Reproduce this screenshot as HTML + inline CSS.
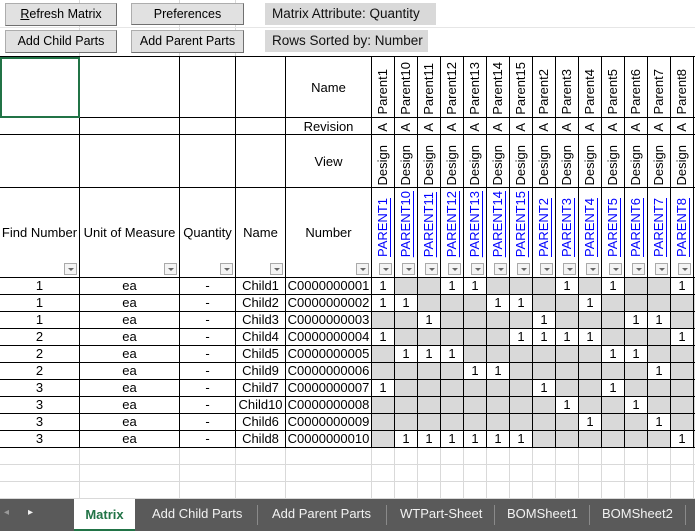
<!DOCTYPE html>
<html><head><meta charset="utf-8"><style>
body{margin:0;width:695px;height:531px;overflow:hidden;background:#fff;font-family:"Liberation Sans",Arial,sans-serif;position:relative}
.g{position:absolute;background:#d9d9d9}
.btn{position:absolute;background:#e1e1e1;border:1px solid #adadad;border-right-color:#707070;border-bottom-color:#707070;font-size:12.5px;text-align:center;line-height:20px;color:#000;box-sizing:border-box}
.lbl{position:absolute;background:#d9d9d9;font-size:13.5px;line-height:22px;padding-left:7px;box-sizing:border-box;color:#111}
table{position:absolute;left:-1px;top:56px;border-collapse:collapse;table-layout:fixed;width:717px}
td{border:1px solid #000;padding:0;font-size:13px;text-align:center;position:relative;overflow:hidden;white-space:nowrap}
.v{writing-mode:vertical-rl;transform:rotate(180deg);position:absolute;left:50%;margin-left:-8px;bottom:2px;width:16px;text-align:left;line-height:16px;font-size:13px;font-weight:normal}
.p{color:#00f;text-decoration:underline;bottom:20px}
.f{position:absolute;right:2px;bottom:2px;width:13px;height:12px;border:1px solid #aaa;background:#f4f4f4;box-sizing:border-box}
.f:after{content:"";position:absolute;left:3px;top:4px;border-left:3px solid transparent;border-right:3px solid transparent;border-top:3px solid #666}
.h4 span{position:absolute;left:0;right:0;top:37px;font-size:13px}
.d td{height:16px;line-height:16px}
.e{background:#d9d9d9}
.tabs{position:absolute;left:0;top:499px;width:695px;height:32px;background:#5a5a5a;color:#f2f2f2;font-size:13px}
.tabs div{position:absolute;top:7px}
.sep{position:absolute;top:6px;width:1px;height:20px;background:#8a8a8a}
</style></head><body>
<div class="g" style="left:79px;top:0;width:1px;height:56px"></div>
<div class="g" style="left:179px;top:0;width:1px;height:56px"></div>
<div class="g" style="left:235px;top:0;width:1px;height:56px"></div>
<div class="g" style="left:0;top:27px;width:695px;height:1px;background:#e6e6e6"></div>
<div class="btn" style="left:5px;top:3px;width:112px;height:23px"><u>R</u>efresh Matrix</div>
<div class="btn" style="left:131px;top:3px;width:113px;height:22px">Preferences</div>
<div class="btn" style="left:5px;top:30px;width:112px;height:23px">Add Child Parts</div>
<div class="btn" style="left:131px;top:30px;width:113px;height:23px">Add Parent Parts</div>
<div class="lbl" style="left:265px;top:3px;width:171px;height:22px">Matrix Attribute: Quantity</div>
<div class="lbl" style="left:265px;top:30px;width:163px;height:22px">Rows Sorted by: Number</div>

<div class="g" style="left:79px;top:448px;width:1px;height:51px"></div>
<div class="g" style="left:179px;top:448px;width:1px;height:51px"></div>
<div class="g" style="left:235px;top:448px;width:1px;height:51px"></div>
<div class="g" style="left:285px;top:448px;width:1px;height:51px"></div>
<div class="g" style="left:371px;top:448px;width:1px;height:51px"></div>
<div class="g" style="left:0;top:464px;width:695px;height:1px"></div>
<div class="g" style="left:0;top:481px;width:695px;height:1px"></div>
<div class="g" style="left:0;top:498px;width:695px;height:1px"></div>
<div style="position:absolute;left:394px;top:448px;width:300px;height:51px;background:repeating-linear-gradient(90deg,#d9d9d9 0 1px,transparent 1px 23px)"></div>

<table>
<colgroup><col style="width:80px"><col style="width:100px"><col style="width:56px"><col style="width:50px"><col style="width:86px">
<col style="width:23px"><col style="width:23px"><col style="width:23px"><col style="width:23px"><col style="width:23px"><col style="width:23px"><col style="width:23px"><col style="width:23px"><col style="width:23px"><col style="width:23px"><col style="width:23px"><col style="width:23px"><col style="width:23px"><col style="width:23px"><col style="width:23px"></colgroup>
<tr style="height:61px"><td style="outline:2px solid #217346;outline-offset:-2px"></td><td></td><td></td><td></td><td>Name</td>
<td><span class="v">Parent1</span></td><td><span class="v">Parent10</span></td><td><span class="v">Parent11</span></td><td><span class="v">Parent12</span></td><td><span class="v">Parent13</span></td><td><span class="v">Parent14</span></td><td><span class="v">Parent15</span></td><td><span class="v">Parent2</span></td><td><span class="v">Parent3</span></td><td><span class="v">Parent4</span></td><td><span class="v">Parent5</span></td><td><span class="v">Parent6</span></td><td><span class="v">Parent7</span></td><td><span class="v">Parent8</span></td><td><span class="v">Parent9</span></td></tr>
<tr style="height:17px"><td></td><td></td><td></td><td></td><td>Revision</td>
<td><span class="v">A</span></td><td><span class="v">A</span></td><td><span class="v">A</span></td><td><span class="v">A</span></td><td><span class="v">A</span></td><td><span class="v">A</span></td><td><span class="v">A</span></td><td><span class="v">A</span></td><td><span class="v">A</span></td><td><span class="v">A</span></td><td><span class="v">A</span></td><td><span class="v">A</span></td><td><span class="v">A</span></td><td><span class="v">A</span></td><td><span class="v">A</span></td></tr>
<tr style="height:53px"><td></td><td></td><td></td><td></td><td>View</td>
<td><span class="v">Design</span></td><td><span class="v">Design</span></td><td><span class="v">Design</span></td><td><span class="v">Design</span></td><td><span class="v">Design</span></td><td><span class="v">Design</span></td><td><span class="v">Design</span></td><td><span class="v">Design</span></td><td><span class="v">Design</span></td><td><span class="v">Design</span></td><td><span class="v">Design</span></td><td><span class="v">Design</span></td><td><span class="v">Design</span></td><td><span class="v">Design</span></td><td><span class="v">Design</span></td></tr>
<tr style="height:90px" class="h4"><td><span>Find Number</span><i class="f"></i></td><td><span>Unit of Measure</span><i class="f"></i></td><td><span>Quantity</span><i class="f"></i></td><td><span>Name</span><i class="f"></i></td><td><span>Number</span><i class="f"></i></td>
<td><b class="v p">PARENT1</b><i class="f"></i></td><td><b class="v p">PARENT10</b><i class="f"></i></td><td><b class="v p">PARENT11</b><i class="f"></i></td><td><b class="v p">PARENT12</b><i class="f"></i></td><td><b class="v p">PARENT13</b><i class="f"></i></td><td><b class="v p">PARENT14</b><i class="f"></i></td><td><b class="v p">PARENT15</b><i class="f"></i></td><td><b class="v p">PARENT2</b><i class="f"></i></td><td><b class="v p">PARENT3</b><i class="f"></i></td><td><b class="v p">PARENT4</b><i class="f"></i></td><td><b class="v p">PARENT5</b><i class="f"></i></td><td><b class="v p">PARENT6</b><i class="f"></i></td><td><b class="v p">PARENT7</b><i class="f"></i></td><td><b class="v p">PARENT8</b><i class="f"></i></td><td><b class="v p">PARENT9</b><i class="f"></i></td></tr>
<tr class="d"><td>1</td><td>ea</td><td>-</td><td>Child1</td><td>C0000000001</td><td>1</td><td class="e"></td><td class="e"></td><td>1</td><td>1</td><td class="e"></td><td class="e"></td><td class="e"></td><td>1</td><td class="e"></td><td>1</td><td class="e"></td><td class="e"></td><td>1</td><td class="e"></td></tr>
<tr class="d"><td>1</td><td>ea</td><td>-</td><td>Child2</td><td>C0000000002</td><td>1</td><td>1</td><td class="e"></td><td class="e"></td><td class="e"></td><td>1</td><td>1</td><td class="e"></td><td class="e"></td><td>1</td><td class="e"></td><td class="e"></td><td class="e"></td><td class="e"></td><td class="e"></td></tr>
<tr class="d"><td>1</td><td>ea</td><td>-</td><td>Child3</td><td>C0000000003</td><td class="e"></td><td class="e"></td><td>1</td><td class="e"></td><td class="e"></td><td class="e"></td><td class="e"></td><td>1</td><td class="e"></td><td class="e"></td><td class="e"></td><td>1</td><td>1</td><td class="e"></td><td class="e"></td></tr>
<tr class="d"><td>2</td><td>ea</td><td>-</td><td>Child4</td><td>C0000000004</td><td>1</td><td class="e"></td><td class="e"></td><td class="e"></td><td class="e"></td><td class="e"></td><td>1</td><td>1</td><td>1</td><td>1</td><td class="e"></td><td class="e"></td><td class="e"></td><td>1</td><td class="e"></td></tr>
<tr class="d"><td>2</td><td>ea</td><td>-</td><td>Child5</td><td>C0000000005</td><td class="e"></td><td>1</td><td>1</td><td>1</td><td class="e"></td><td class="e"></td><td class="e"></td><td class="e"></td><td class="e"></td><td class="e"></td><td>1</td><td>1</td><td class="e"></td><td class="e"></td><td class="e"></td></tr>
<tr class="d"><td>2</td><td>ea</td><td>-</td><td>Child9</td><td>C0000000006</td><td class="e"></td><td class="e"></td><td class="e"></td><td class="e"></td><td>1</td><td>1</td><td class="e"></td><td class="e"></td><td class="e"></td><td class="e"></td><td class="e"></td><td class="e"></td><td>1</td><td class="e"></td><td class="e"></td></tr>
<tr class="d"><td>3</td><td>ea</td><td>-</td><td>Child7</td><td>C0000000007</td><td>1</td><td class="e"></td><td class="e"></td><td class="e"></td><td class="e"></td><td class="e"></td><td class="e"></td><td>1</td><td class="e"></td><td class="e"></td><td>1</td><td class="e"></td><td class="e"></td><td class="e"></td><td class="e"></td></tr>
<tr class="d"><td>3</td><td>ea</td><td>-</td><td>Child10</td><td>C0000000008</td><td class="e"></td><td class="e"></td><td class="e"></td><td class="e"></td><td class="e"></td><td class="e"></td><td class="e"></td><td class="e"></td><td>1</td><td class="e"></td><td class="e"></td><td>1</td><td class="e"></td><td class="e"></td><td class="e"></td></tr>
<tr class="d"><td>3</td><td>ea</td><td>-</td><td>Child6</td><td>C0000000009</td><td class="e"></td><td class="e"></td><td class="e"></td><td class="e"></td><td class="e"></td><td class="e"></td><td class="e"></td><td class="e"></td><td class="e"></td><td>1</td><td class="e"></td><td class="e"></td><td>1</td><td class="e"></td><td class="e"></td></tr>
<tr class="d"><td>3</td><td>ea</td><td>-</td><td>Child8</td><td>C0000000010</td><td class="e"></td><td>1</td><td>1</td><td>1</td><td>1</td><td>1</td><td>1</td><td class="e"></td><td class="e"></td><td class="e"></td><td class="e"></td><td class="e"></td><td class="e"></td><td>1</td><td class="e"></td></tr>
</table>

<div class="tabs">
<div style="left:4px;top:8px;color:#999;font-size:10px">◂</div>
<div style="left:28px;top:8px;font-size:10px">▸</div>
<div style="left:74px;top:0;width:61px;height:30px;background:#fff;border-bottom:2px solid #217346;color:#217346;font-weight:bold;text-align:center;line-height:31px">Matrix</div>
<div style="left:152px">Add Child Parts</div>
<span class="sep" style="left:257px"></span>
<div style="left:272px">Add Parent Parts</div>
<span class="sep" style="left:386px"></span>
<div style="left:400px">WTPart-Sheet</div>
<span class="sep" style="left:494px"></span>
<div style="left:507px">BOMSheet1</div>
<span class="sep" style="left:589px"></span>
<div style="left:602px">BOMSheet2</div>
<span class="sep" style="left:685px"></span>
</div>
</body></html>
